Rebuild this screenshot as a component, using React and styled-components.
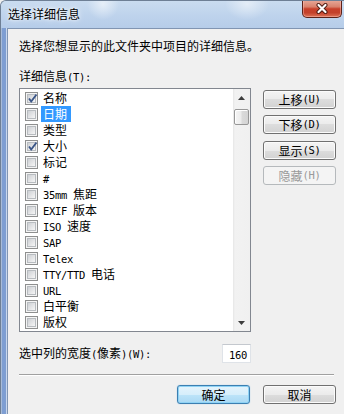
import React from 'react';
import styled, { createGlobalStyle } from 'styled-components';

const Global = createGlobalStyle`
  html, body { margin: 0; padding: 0; width: 344px; height: 414px; overflow: hidden; background: #f0f0f0; }
  body { font-family: "Noto Sans CJK SC", "Liberation Sans", sans-serif; font-size: 12px; color: #000; }
  * { box-sizing: border-box; }
`;

const Window = styled.div`
  width: 344px;
  height: 414px;
  display: flex;
  flex-direction: column;
  border-left: 1px solid #6e7f95;
  border-top: 1px solid #6e7f95;
  border-top-left-radius: 6px;
  overflow: hidden;
  background: #b9cfe9;
`;

const TitleBar = styled.div`
  height: 27px;
  flex: none;
  display: flex;
  align-items: flex-start;
  background:
    radial-gradient(ellipse 16px 16px at 102px 3px, rgba(255,255,255,0.55), rgba(255,255,255,0)),
    radial-gradient(ellipse 22px 16px at 246px 3px, rgba(255,255,255,0.5), rgba(255,255,255,0)),
    linear-gradient(to bottom, #cadcf0 0%, #bed3ec 55%, #b6cde9 100%);
`;

const Title = styled.div`
  padding-left: 7px;
  line-height: 26px;
  font-size: 12px;
  color: #000;
  text-shadow: 0 0 6px rgba(255,255,255,0.95), 0 0 3px rgba(255,255,255,0.9);
`;

const CloseButton = styled.div`
  margin-left: auto;
  margin-right: 2px;
  margin-top: -1px;
  width: 40px;
  height: 18px;
  display: flex;
  align-items: center;
  justify-content: center;
  border: 1px solid #5c2219;
  border-top: none;
  border-radius: 0 0 5px 5px;
  background: linear-gradient(to bottom, #e8aa9a 0%, #d9826d 40%, #c8402a 52%, #c3412b 75%, #dd7357 100%);
  box-shadow: inset 0 0 0 1px rgba(255,200,190,0.45);
`;

const Body = styled.div`
  flex: 1;
  display: flex;
  min-height: 0;
`;

const SideFrame = styled.div`
  width: 6px;
  flex: none;
  background: linear-gradient(to right, #a9bcd8 0px, #a9bcd8 1px, #7e9ed2 1px, #7e9ed2 5px, #c9d8ee 5px);
`;

const Client = styled.div`
  flex: 1;
  display: flex;
  flex-direction: column;
  background: #f0f0f0;
  border-left: 1px solid #8195b2;
  border-top: 1px solid #8195b2;
  padding: 0 8px 0 11px;
`;

const Text = styled.div`
  line-height: 16px;
  white-space: nowrap;
  margin-top: ${p => p.$top || 0}px;
`;

const Latin = styled.span`
  font-family: "DejaVu Sans Mono", "Liberation Mono", monospace;
  font-size: 10.5px;
  letter-spacing: -0.32px;
`;

const Mixed = ({ text }) =>
  text.split(/([\x20-\x7E]+)/).map((part, i) =>
    /[\x21-\x7E]/.test(part) ? <Latin key={i}>{part}</Latin> : part
  );

const Middle = styled.div`
  margin-top: 3px;
  display: grid;
  grid-template-columns: 232px 73px;
  column-gap: 12px;
  align-items: start;
`;

const ListBox = styled.div`
  height: 244px;
  border: 1px solid #828790;
  background: #fff;
  display: flex;
`;

const Items = styled.div`
  flex: 1;
  padding: 1px 0;
  overflow: hidden;
`;

const Row = styled.div`
  height: 16px;
  display: flex;
  align-items: center;
  padding-left: 5px;
`;

const Box = styled.span`
  position: relative;
  width: 13px;
  height: 13px;
  flex: none;
  border: 1px solid #8e8f8f;
  background: #f4f4f4;
  padding: 1px;
  display: flex;
`;

const BoxInner = styled.span`
  flex: 1;
  border: 1px solid #b8bcc0;
  background: linear-gradient(135deg, #cdd0d4 0%, #e2e3e5 50%, #f6f6f6 100%);
`;

const CheckMark = styled.svg`
  position: absolute;
  left: 0;
  top: -1px;
`;

const Label = styled.span`
  margin-left: 3px;
  padding: 0 4px 0 2px;
  line-height: 16px;
  white-space: nowrap;
  background: ${p => (p.$selected ? '#3399ff' : 'transparent')};
  color: ${p => (p.$selected ? '#fff' : '#000')};
`;

const ScrollBar = styled.div`
  width: 17px;
  flex: none;
  display: flex;
  flex-direction: column;
  background: linear-gradient(to right, #e6e6e6 0px, #f2f2f2 2px, #f0f0f0 100%);
`;

const Arrow = styled.div`
  height: 17px;
  flex: none;
  display: flex;
  align-items: center;
  justify-content: center;
`;

const Track = styled.div`
  flex: 1;
`;

const Thumb = styled.div`
  margin: 3px 1px 0 1px;
  height: 16px;
  border: 1px solid #979797;
  border-radius: 2px;
  background: linear-gradient(to right, #f5f5f5 0%, #ececec 45%, #dadada 55%, #d4d4d4 100%);
  box-shadow: inset 1px 1px 0 #fff;
`;

const Buttons = styled.div`
  padding-top: 2px;
  display: flex;
  flex-direction: column;
  gap: 6.3px;
`;

const Button = styled.div`
  width: 73px;
  height: 19px;
  flex: none;
  display: flex;
  align-items: center;
  justify-content: center;
  line-height: 17px;
  border-radius: 3px;
  white-space: nowrap;
  border: 1px solid ${p => (p.$disabled ? '#b5b9bc' : p.$primary ? '#3c7fb1' : '#707070')};
  color: ${p => (p.$disabled ? '#9a9a9a' : '#000')};
  background: ${p =>
    p.$disabled
      ? '#f4f4f4'
      : p.$primary
      ? 'linear-gradient(to bottom, #e5f4fc 0%, #d6eefb 50%, #bde4f9 50%, #aad9f4 100%)'
      : 'linear-gradient(to bottom, #f4f4f4 0%, #ebebeb 50%, #dddddd 50%, #d2d2d2 100%)'};
  box-shadow: ${p =>
    p.$disabled
      ? 'none'
      : p.$primary
      ? 'inset 0 0 0 1px #8fd3f5, 0 0 1px #6fb8e6'
      : 'inset 0 0 0 1px #fbfbfb'};
`;

const WidthRow = styled.div`
  margin-top: 12px;
  width: 232px;
  height: 19px;
  display: flex;
  align-items: center;
  justify-content: space-between;
`;

const NumberBox = styled.div`
  width: 29px;
  height: 19px;
  background: #fff;
  border: 1px solid #dfe3e8;
  border-top-color: #c4c8ce;
  text-align: right;
  padding-right: 3px;
  line-height: 17px;
`;

const Separator = styled.div`
  margin-top: 11px;
  margin-right: 2px;
  height: 1px;
  background: #a0a0a0;
  box-shadow: 0 1px 0 #fff;
`;

const Footer = styled.div`
  margin-top: 10px;
  display: flex;
  justify-content: flex-end;
  gap: 13px;
`;

const CloseGlyph = () => (
  <svg width="14" height="11" viewBox="0 0 14 11">
    <path d="M3.5 2 L10.5 9 M10.5 2 L3.5 9" stroke="#4a1a12" strokeWidth="4" strokeLinecap="round" fill="none" />
    <path d="M3.5 2 L10.5 9 M10.5 2 L3.5 9" stroke="#fff" strokeWidth="2.2" strokeLinecap="round" fill="none" />
  </svg>
);

const Checkbox = ({ checked }) => (
  <Box>
    <BoxInner />
    {checked && (
      <CheckMark width="13" height="13" viewBox="0 0 13 13">
        <path d="M3 6.5 L5.2 9.5 L10.5 2.5" stroke="#3b5687" strokeWidth="1.9" fill="none" strokeLinejoin="miter" />
      </CheckMark>
    )}
  </Box>
);

const Triangle = ({ down }) => (
  <svg width="7" height="4" viewBox="0 0 7 4">
    <polygon points={down ? '0,0 7,0 3.5,4' : '0,4 7,4 3.5,0'} fill="#3c3c3c" />
  </svg>
);

const items = [
  { t: '名称', c: true },
  { t: '日期', s: true },
  { t: '类型' },
  { t: '大小', c: true },
  { t: '标记' },
  { t: '#' },
  { t: '35mm 焦距' },
  { t: 'EXIF 版本' },
  { t: 'ISO 速度' },
  { t: 'SAP' },
  { t: 'Telex' },
  { t: 'TTY/TTD 电话' },
  { t: 'URL' },
  { t: '白平衡' },
  { t: '版权' },
];

export default function App() {
  return (
    <>
      <Global />
      <Window>
        <TitleBar>
          <Title>选择详细信息</Title>
          <CloseButton>
            <CloseGlyph />
          </CloseButton>
        </TitleBar>
        <Body>
          <SideFrame />
          <Client>
            <Text $top={9}>选择您想显示的此文件夹中项目的详细信息。</Text>
            <Text $top={14}><Mixed text="详细信息(T):" /></Text>
            <Middle>
              <ListBox>
                <Items>
                  {items.map(it => (
                    <Row key={it.t}>
                      <Checkbox checked={it.c} />
                      <Label $selected={it.s}><Mixed text={it.t} /></Label>
                    </Row>
                  ))}
                </Items>
                <ScrollBar>
                  <Arrow><Triangle /></Arrow>
                  <Track><Thumb /></Track>
                  <Arrow><Triangle down /></Arrow>
                </ScrollBar>
              </ListBox>
              <Buttons>
                <Button><Mixed text="上移(U)" /></Button>
                <Button><Mixed text="下移(D)" /></Button>
                <Button><Mixed text="显示(S)" /></Button>
                <Button $disabled><Mixed text="隐藏(H)" /></Button>
              </Buttons>
            </Middle>
            <WidthRow>
              <Text><Mixed text="选中列的宽度(像素)(W):" /></Text>
              <NumberBox><Latin>160</Latin></NumberBox>
            </WidthRow>
            <Separator />
            <Footer>
              <Button $primary>确定</Button>
              <Button>取消</Button>
            </Footer>
          </Client>
        </Body>
      </Window>
    </>
  );
}
